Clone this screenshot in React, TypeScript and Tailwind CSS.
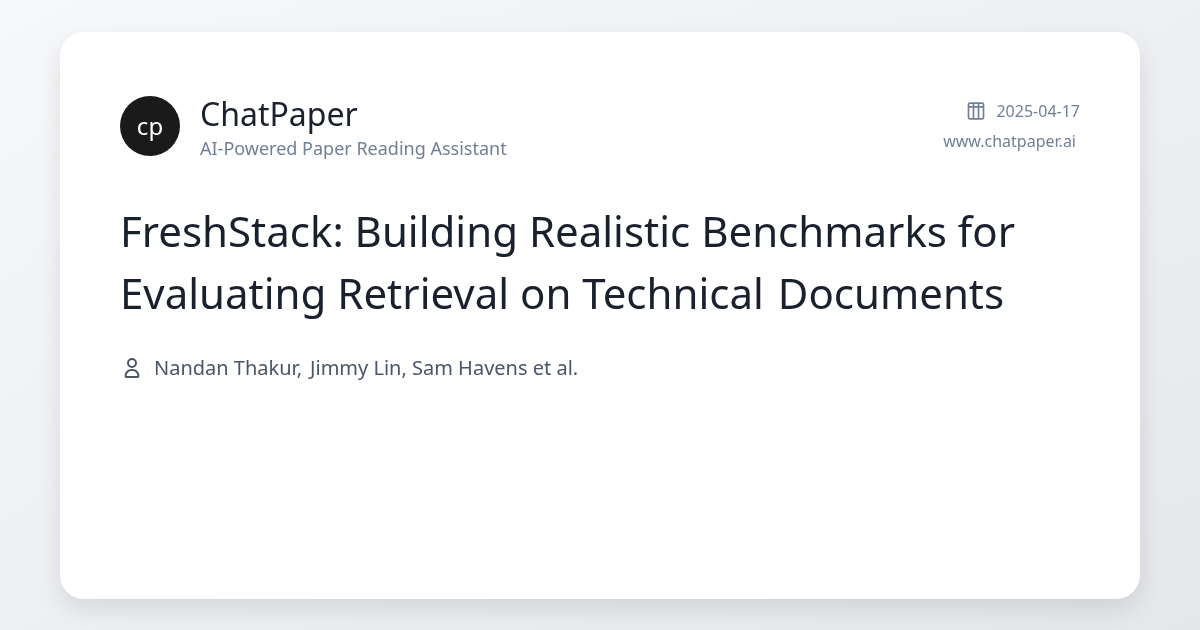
import React from 'react';

const App: React.FC = () => {
  return (
    <div
      className="w-[1200px] h-[630px] overflow-hidden bg-gradient-to-br from-[#f7f8fa] to-[#e5e7eb] p-[32px_60px]"
      style={{ fontFamily: '"Noto Sans", sans-serif' }}
    >
      <div className="h-[567px] rounded-[24px] bg-white shadow-[0_10px_25px_rgba(0,0,0,0.1)] px-[60px] pt-[64px] [will-change:transform]">
        <div className="flex justify-between items-start">
          <div className="flex items-start gap-[20px]">
            <div className="w-[60px] h-[60px] rounded-full bg-[#1a1a1a] flex items-center justify-center text-white text-[24px]">
              cp
            </div>
            <div>
              <div className="text-[32px] leading-[36px] text-[#1a202c]">ChatPaper</div>
              <div className="mt-[2px] text-[18px] leading-[28px] text-[#718096]">AI-Powered Paper Reading Assistant</div>
            </div>
          </div>
          <div className="flex flex-col items-end text-[16px] text-[#718096]">
            <div className="flex items-center gap-[10px] leading-[30px]">
              <svg width="20" height="20" viewBox="0 0 24 24" fill="none" stroke="currentColor" strokeWidth="2">
                <rect x="3" y="2.5" width="18" height="19" rx="2" />
                <path d="M3 7h18M9 2.5v19M15 2.5v19" />
              </svg>
              <span>2025-04-17</span>
            </div>
            <div className="leading-[30px] pr-[4px]">www.chatpaper.ai</div>
          </div>
        </div>
        <h1 className="mt-[38px] text-[42px] leading-[62px] font-normal text-[#1a202c]">
          FreshStack: Building Realistic Benchmarks for
          <br />
          Evaluating Retrieval on Technical <span className="ml-[3px]">Documents</span>
        </h1>
        <div className="mt-[29px] flex items-center gap-[10px] text-[20px] text-[#4a5568]">
          <svg width="24" height="24" viewBox="0 0 24 24" fill="none" stroke="currentColor" strokeWidth="2" strokeLinecap="round" strokeLinejoin="round">
            <circle cx="12" cy="7" r="4" />
            <path d="M6.5 21h11a1 1 0 0 0 1-1 6 6 0 0 0-6-6h-1a6 6 0 0 0-6 6 1 1 0 0 0 1 1z" />
          </svg>
          <div className="flex gap-[8px]">
            <span>Nandan Thakur,</span>
            <span>Jimmy Lin, Sam Havens et al.</span>
          </div>
        </div>
      </div>
    </div>
  );
};

export default App;
